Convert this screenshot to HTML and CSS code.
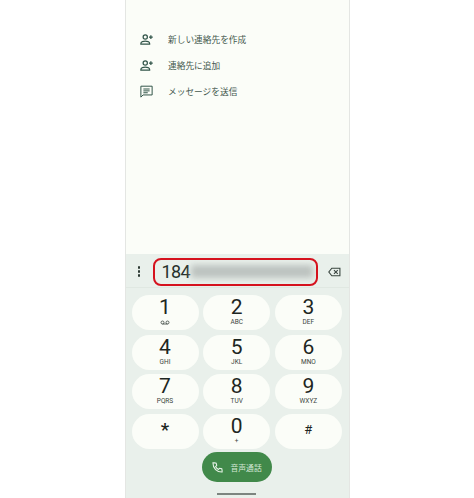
FILE: index.html
```html
<!DOCTYPE html>
<html lang="ja">
<head>
  <meta charset="UTF-8">
  <title>電話</title>
  <link rel="stylesheet" href="styles.css">
</head>
<body>
  <div class="phone">
    <div class="actions">
      <div class="action">
        <svg class="icon" viewBox="0 0 24 24"><circle cx="10" cy="8" r="3.4"/><path d="M3 19.500v-1.200c0-2.600 4.500-3.900 7-3.900s7 1.300 7 3.900v1.200z"/><path d="M19 5v6M16 8h6"/></svg>
        <span>新しい連絡先を作成</span>
      </div>
      <div class="action">
        <svg class="icon" viewBox="0 0 24 24"><circle cx="10" cy="8" r="3.4"/><path d="M3 19.500v-1.200c0-2.600 4.500-3.900 7-3.900s7 1.300 7 3.900v1.200z"/><path d="M19 5v6M16 8h6"/></svg>
        <span>連絡先に追加</span>
      </div>
      <div class="action">
        <svg class="icon message" viewBox="0 0 24 24"><path d="M3 3.500h18v14H6.500L3 21z"/><path d="M7 8h10M7 11h10M7 14h7"/></svg>
        <span>メッセージを送信</span>
      </div>
    </div>

    <div class="dialer">
      <div class="number-row">
        <div class="more"><i></i><i></i><i></i></div>
        <div class="number">
          <span class="digits">184</span>
          <div class="blurred"></div>
        </div>
        <svg class="backspace" viewBox="0 0 24 18"><path d="M7 2h15v14H7L1.500 9z"/><path d="M11 5.500l7 7M18 5.500l-7 7"/></svg>
      </div>
      <div class="keypad">
        <div class="key"><b>1</b><svg class="voicemail" viewBox="0 0 16 8"><circle cx="4" cy="4" r="2.400"/><circle cx="12" cy="4" r="2.400"/><path d="M4 6.400h8"/></svg></div>
        <div class="key"><b>2</b><small>ABC</small></div>
        <div class="key"><b>3</b><small>DEF</small></div>
        <div class="key"><b>4</b><small>GHI</small></div>
        <div class="key"><b>5</b><small>JKL</small></div>
        <div class="key"><b>6</b><small>MNO</small></div>
        <div class="key"><b>7</b><small>PQRS</small></div>
        <div class="key"><b>8</b><small>TUV</small></div>
        <div class="key"><b>9</b><small>WXYZ</small></div>
        <div class="key symbol"><b>*</b></div>
        <div class="key"><b>0</b><small>+</small></div>
        <div class="key symbol hash"><b>#</b></div>
      </div>
      <div class="call">
        <svg class="call-icon" viewBox="0 0 24 24"><path d="M6.600 3.500l3 .6 1 4-2.200 2.200c1 2.200 2.900 4.100 5.300 5.300l2.200-2.200 4 1 .6 3v3c-9.500.4-17-7.200-16.900-16.900z"/></svg>
        <span>音声通話</span>
      </div>
      <div class="home-bar"></div>
    </div>
  </div>
</body>
</html>
```

FILE: styles.css
```css
body { margin:0; background:#fff; font-family:"Noto Sans CJK JP", "Noto Sans", sans-serif; display:flex; justify-content:center; }
.phone { width:225px; height:498px; box-sizing:border-box; border-left:1px solid #e4e6e3; border-right:1px solid #e4e6e3; background:#fbfdf8; display:flex; flex-direction:column; }

.actions { flex:1; padding-top:26px; }
.action { height:26px; display:flex; align-items:center; padding-left:13px; font-size:8.700px; color:#44584e; }
.action span { margin-left:14.500px; }
.icon { width:15px; height:15px; fill:none; stroke:#33564a; stroke-width:2; }
.icon.message { stroke-width:1.600; }

.dialer { height:244px; background:#e9f0eb; display:flex; flex-direction:column; }
.number-row { height:34px; box-sizing:border-box; padding-top:2px; display:flex; align-items:center; border-bottom:1px solid #e0e8e2; }
.more { width:27px; display:flex; flex-direction:column; align-items:center; gap:1.500px; }
.more i { width:2.500px; height:2.500px; background:#2c3a33; border-radius:50%; }
.number { width:161px; height:24px; border:2px solid #d5121e; border-radius:8px; display:flex; align-items:center; overflow:hidden; }
.digits { margin-left:7px; font-family:Roboto, sans-serif; font-size:18px; letter-spacing:-.6px; color:#26302b; }
.blurred { width:122px; height:13px; margin-left:1px; background:#bcc2bf; filter:blur(3px); }
.backspace { width:13px; height:10px; margin-left:10px; fill:none; stroke:#38443e; stroke-width:2; }

.keypad { display:grid; grid-template-columns:repeat(3, 67px); grid-auto-rows:35px; column-gap:4.700px; row-gap:4.500px; padding:7px 0 0 6px; }
.key { box-sizing:border-box; padding-top:1px; background:#fbfdf8; border-radius:18px; display:flex; flex-direction:column; align-items:center; font-family:Roboto, sans-serif; color:#1e2622; }
.key b { font-weight:400; font-size:21px; line-height:23px; }
.key small { font-size:6.500px; line-height:7px; color:#3c4641; }
.voicemail { width:10px; height:5px; margin-top:1px; fill:none; stroke:#3c4641; stroke-width:1.300; }
.symbol b { line-height:30px; font-size:19px; font-weight:500; }
.hash b { font-size:13px; font-weight:400; }

.call { width:70px; height:30px; margin:3.500px 0 0 76px; background:#41894a; border-radius:15px; display:flex; align-items:center; color:#d5e8d6; font-size:7.800px; }
.call span { margin-left:7px; }
.call-icon { width:13px; height:13px; margin-left:9px; fill:none; stroke:#e6f2e6; stroke-width:2; }
.home-bar { width:39px; height:2px; margin:11px 0 0 91px; background:#7d8580; }
```
